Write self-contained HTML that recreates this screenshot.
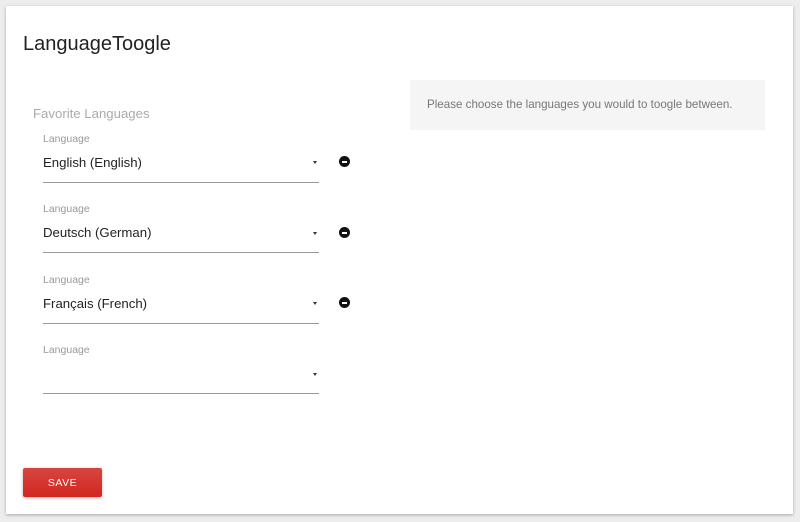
<!DOCTYPE html>
<html><head><style>
body{margin:0;width:800px;height:522px;background:#ededed;font-family:"Liberation Sans",sans-serif;position:relative;overflow:hidden}
.card{position:absolute;left:6px;top:6px;width:787px;height:508px;background:#fff;box-shadow:0 1px 3px rgba(0,0,0,.3)}
.abs{position:absolute;white-space:nowrap}
h1{position:absolute;left:23px;top:33px;margin:0;font-size:20px;font-weight:normal;color:#222}
.lbl{font-size:10.5px;color:#999}
.val{font-size:13.2px;color:#222}
.line{position:absolute;left:43px;width:276px;height:1px;background:#999}
.arr{position:absolute;left:313px;width:0;height:0;border-left:2.5px solid transparent;border-right:2.5px solid transparent;border-top:3px solid #333}
.minus{position:absolute;left:339px;width:11px;height:11px;border-radius:50%;background:#111}
.minus:after{content:"";position:absolute;left:3px;top:5px;width:5px;height:1.5px;background:#fff}
</style></head><body>
<div class="card"></div>
<h1>LanguageToogle</h1>
<div class="abs" style="left:33px;top:106px;font-size:13.2px;color:#aaa">Favorite Languages</div>

<div class="abs lbl" style="left:43px;top:133px">Language</div>
<div class="abs val" style="left:43px;top:155px">English (English)</div>
<div class="arr" style="top:161px"></div>
<div class="minus" style="top:156px"></div>
<div class="line" style="top:182px"></div>

<div class="abs lbl" style="left:43px;top:203px">Language</div>
<div class="abs val" style="left:43px;top:225px">Deutsch (German)</div>
<div class="arr" style="top:232px"></div>
<div class="minus" style="top:227px"></div>
<div class="line" style="top:252px"></div>

<div class="abs lbl" style="left:43px;top:274px">Language</div>
<div class="abs val" style="left:43px;top:296px">Français (French)</div>
<div class="arr" style="top:302px"></div>
<div class="minus" style="top:297px"></div>
<div class="line" style="top:323px"></div>

<div class="abs lbl" style="left:43px;top:344px">Language</div>
<div class="arr" style="top:373px"></div>
<div class="line" style="top:393px"></div>

<div class="abs" style="left:410px;top:80px;width:355px;height:50px;background:#f5f5f5"></div>
<div class="abs" style="left:427px;top:98px;font-size:11.6px;color:#777">Please choose the languages you would to toogle between.</div>

<div class="abs" style="left:23px;top:468px;width:79px;height:29px;border-radius:2px;background:linear-gradient(#d94440,#d0281f);box-shadow:0 1px 3px rgba(0,0,0,.3);color:#fff;font-size:10.5px;text-align:center;line-height:31px;letter-spacing:.5px">SAVE</div>
</body></html>
